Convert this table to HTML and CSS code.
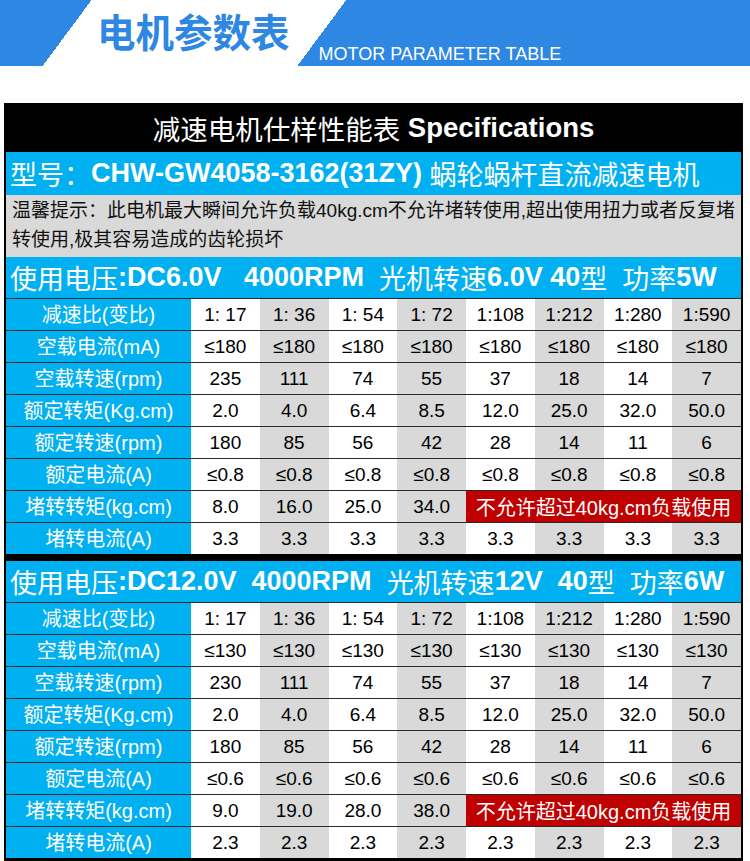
FILE: index.html
```html
<!DOCTYPE html>
<html lang="zh-CN">
<head>
<meta charset="utf-8">
<title>电机参数表</title>
<link rel="stylesheet" href="styles.css">
</head>
<body>
<header class="banner">
  <h1 class="banner-title">电机参数表</h1>
  <div class="banner-sub">MOTOR PARAMETER TABLE</div>
</header>

<section class="sheet">
  <div class="sheet-title">减速电机仕样性能表 <b>Specifications</b></div>
  <div class="model">型号：<b>CHW-GW4058-3162(31ZY)</b> 蜗轮蜗杆直流减速电机</div>
  <div class="notice">
    <div class="line">温馨提示：此电机最大瞬间允许负载40kg.cm不允许堵转使用,超出使用扭力或者反复堵</div>
    <div class="line">转使用,极其容易造成的齿轮损坏</div>
  </div>

  <div class="volt">使用电压<b>:DC6.0V   4000RPM  </b>光机转速<b>6.0V 40</b>型  功率<b>5W</b></div>
  <div class="rows">
    <div class="row"><div class="lab">减速比(变比)</div><div>1: 17</div><div>1: 36</div><div>1: 54</div><div>1: 72</div><div>1:108</div><div>1:212</div><div>1:280</div><div>1:590</div></div>
    <div class="row"><div class="lab">空载电流(mA)</div><div>≤180</div><div>≤180</div><div>≤180</div><div>≤180</div><div>≤180</div><div>≤180</div><div>≤180</div><div>≤180</div></div>
    <div class="row"><div class="lab">空载转速(rpm)</div><div>235</div><div>111</div><div>74</div><div>55</div><div>37</div><div>18</div><div>14</div><div>7</div></div>
    <div class="row"><div class="lab">额定转矩(Kg.cm)</div><div>2.0</div><div>4.0</div><div>6.4</div><div>8.5</div><div>12.0</div><div>25.0</div><div>32.0</div><div>50.0</div></div>
    <div class="row"><div class="lab">额定转速(rpm)</div><div>180</div><div>85</div><div>56</div><div>42</div><div>28</div><div>14</div><div>11</div><div>6</div></div>
    <div class="row"><div class="lab">额定电流(A)</div><div>≤0.8</div><div>≤0.8</div><div>≤0.8</div><div>≤0.8</div><div>≤0.8</div><div>≤0.8</div><div>≤0.8</div><div>≤0.8</div></div>
    <div class="row"><div class="lab">堵转转矩(kg.cm)</div><div>8.0</div><div>16.0</div><div>25.0</div><div>34.0</div><div class="warn">不允许超过40kg.cm负载使用</div></div>
    <div class="row"><div class="lab">堵转电流(A)</div><div>3.3</div><div>3.3</div><div>3.3</div><div>3.3</div><div>3.3</div><div>3.3</div><div>3.3</div><div>3.3</div></div>
  </div>

  <div class="sep"></div>

  <div class="volt">使用电压<b>:DC12.0V  4000RPM  </b>光机转速<b>12V  40</b>型  功率<b>6W</b></div>
  <div class="rows">
    <div class="row"><div class="lab">减速比(变比)</div><div>1: 17</div><div>1: 36</div><div>1: 54</div><div>1: 72</div><div>1:108</div><div>1:212</div><div>1:280</div><div>1:590</div></div>
    <div class="row"><div class="lab">空载电流(mA)</div><div>≤130</div><div>≤130</div><div>≤130</div><div>≤130</div><div>≤130</div><div>≤130</div><div>≤130</div><div>≤130</div></div>
    <div class="row"><div class="lab">空载转速(rpm)</div><div>230</div><div>111</div><div>74</div><div>55</div><div>37</div><div>18</div><div>14</div><div>7</div></div>
    <div class="row"><div class="lab">额定转矩(Kg.cm)</div><div>2.0</div><div>4.0</div><div>6.4</div><div>8.5</div><div>12.0</div><div>25.0</div><div>32.0</div><div>50.0</div></div>
    <div class="row"><div class="lab">额定转速(rpm)</div><div>180</div><div>85</div><div>56</div><div>42</div><div>28</div><div>14</div><div>11</div><div>6</div></div>
    <div class="row"><div class="lab">额定电流(A)</div><div>≤0.6</div><div>≤0.6</div><div>≤0.6</div><div>≤0.6</div><div>≤0.6</div><div>≤0.6</div><div>≤0.6</div><div>≤0.6</div></div>
    <div class="row"><div class="lab">堵转转矩(kg.cm)</div><div>9.0</div><div>19.0</div><div>28.0</div><div>38.0</div><div class="warn">不允许超过40kg.cm负载使用</div></div>
    <div class="row"><div class="lab">堵转电流(A)</div><div>2.3</div><div>2.3</div><div>2.3</div><div>2.3</div><div>2.3</div><div>2.3</div><div>2.3</div><div>2.3</div></div>
  </div>
</section>
</body>
</html>
```

FILE: styles.css
```css
* { box-sizing: border-box; }

body {
  margin: 0;
  background: #ffffff;
  font-family: "Liberation Sans", "Noto Sans CJK SC", sans-serif;
  color: #000;
}

/* ---------- banner ---------- */
.banner {
  height: 66px;
  display: flex;
  align-items: flex-start;
  background: linear-gradient(126.6deg,
    #2d87e3 0, #2d87e3 73.5px,
    #ffffff 73.5px, #ffffff 278px,
    #2d87e3 278px, #2d87e3 100%);
}

.banner-title {
  margin: 11px 0 0 97px;
  font-family: "Noto Sans CJK SC", sans-serif;
  font-weight: 700;
  font-size: 38.5px;
  line-height: 38px;
  color: #2d87e3;
  white-space: nowrap;
}

.banner-sub {
  margin: 45px 0 0 29px;
  font-size: 18px;
  line-height: 18px;
  color: #ffffff;
  white-space: nowrap;
}

/* ---------- sheet ---------- */
.sheet {
  margin: 37px 0 0 4px;
  width: 739px;
  border-left: 2px solid #000;
  border-right: 2px solid #000;
  border-bottom: 3px solid #000;
}

.sheet-title {
  height: 49px;
  background: #000;
  color: #fff;
  display: flex;
  align-items: center;
  justify-content: center;
  font-size: 27.5px;
  white-space: pre;
}

.sheet-title b { font-weight: 700; }

.model {
  height: 43px;
  background: #00b0f0;
  color: #fff;
  display: flex;
  align-items: center;
  padding-left: 4px;
  font-size: 27px;
  white-space: pre;
}

.notice {
  height: 62px;
  background: #d9d9d9;
  padding: 1px 0 0 6px;
  font-size: 19px;
  line-height: 29px;
  color: #111;
}

.notice .line { white-space: nowrap; }

.volt {
  height: 41px;
  background: #00b0f0;
  color: #fff;
  display: flex;
  align-items: center;
  padding-left: 4px;
  font-size: 27px;
  white-space: pre;
}

.volt b { font-weight: 700; }

.sep {
  height: 7px;
  background: #000;
}

/* ---------- data rows ---------- */
.row {
  display: grid;
  grid-template-columns: 185px repeat(8, 1fr);
  height: 32px;
  border-top: 1px solid #2a2a2a;
}

.row > div {
  display: flex;
  align-items: center;
  justify-content: center;
  font-size: 19px;
  white-space: nowrap;
  background: #ffffff;
}

.row > div:nth-child(odd) { background: #d9d9d9; }

.row > div.lab {
  background: #00b0f0;
  color: #fff;
  font-size: 20px;
  padding-bottom: 2px;
}

.row > div.warn {
  grid-column: span 4;
  background: #c00000;
  color: #fff;
  font-size: 20px;
  padding-bottom: 1px;
}
```
